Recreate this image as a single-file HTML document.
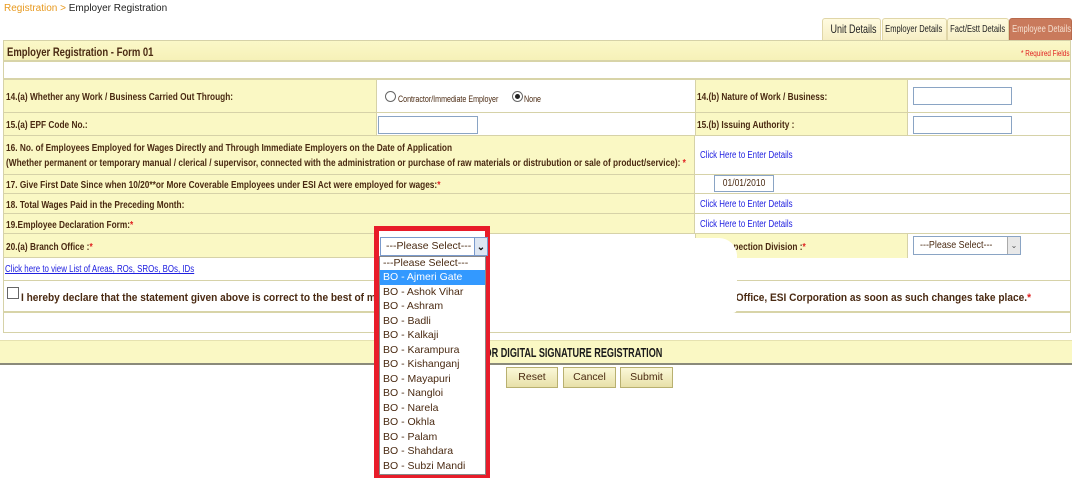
<!DOCTYPE html>
<html><head><meta charset="utf-8"><style>
*{margin:0;padding:0;box-sizing:border-box}
body{width:1072px;height:480px;background:#fff;position:relative;overflow:hidden;font-family:"Liberation Sans",sans-serif;color:#4a2a12}
.a{position:absolute;white-space:nowrap}
.n{transform:scaleX(.79);transform-origin:0 0}
.y{background:#faf8c4}
.b{font-weight:bold;font-size:10.5px}
.l{font-size:10px;color:#2020e0}
.hl{border-bottom:1px solid #d6d2a8}
.inp{position:absolute;background:#fff;border:1px solid #8aa4c4;height:18px}
.tab{position:absolute;top:18px;height:22px;border:1px solid #e0d6a8;border-bottom:none;border-radius:3px 3px 0 0;background:linear-gradient(#fffbe0,#f6eec4);font-size:10.5px;color:#222;line-height:21px;white-space:nowrap;overflow:hidden}
.tab span{display:inline-block;transform:scaleX(.72);transform-origin:0 0;padding-left:3px}
.btn{position:absolute;top:367px;height:21px;border:1px solid #b8b070;background:linear-gradient(#fbf8d8,#e8e0a8);font-size:10.5px;text-align:center;line-height:19px;color:#4a2a12}
.it{height:14.5px;line-height:14.5px;padding-left:3px;font-size:10.5px;color:#4a2a12;white-space:nowrap}
</style></head><body>
<div class="a" style="left:4px;top:3px;font-size:10px"><span style="color:#e89a20">Registration</span> <span style="color:#e89a20">&gt;</span> <span style="color:#222">Employer Registration</span></div>

<div class="tab" style="left:822px;width:59px;font-size:12px"><span style="padding-left:10px;transform:scaleX(.75)">Unit Details</span></div>
<div class="tab" style="left:882px;width:65px"><span>Employer Details</span></div>
<div class="tab" style="left:947px;width:62px"><span>Fact/Estt Details</span></div>
<div class="tab" style="left:1009px;width:63px;background:#c97a5c;border-color:#b86a4c;color:#f5e0d0"><span>Employee Details</span></div>

<div class="a" style="left:3px;top:40px;width:1068px;height:293px;border:1px solid #d6d2a8;background:#fff"></div>
<div class="a" style="left:4px;top:41px;width:1066px;height:21px;background:linear-gradient(#fbf8c8,#f6f1b8);border-bottom:2px solid #d8d4a8"></div>
<div class="a b n" style="left:7px;top:45px;font-size:12px">Employer Registration - Form 01</div>
<div class="a n" style="left:1021px;top:49px;font-size:8px;color:#e02020">* Required Fields</div>

<div class="a" style="left:3px;top:78px;width:1068px;border-top:2px solid #d8d4a8"></div>
<div class="a y hl" style="left:4px;top:80px;width:373px;height:33px;border-right:1px solid #d6d2a8"></div>
<div class="a b n" style="left:6px;top:91px">14.(a) Whether any Work / Business Carried Out Through:</div>
<div class="a hl" style="left:377px;top:80px;width:318px;height:33px"></div>
<div class="a" style="left:385px;top:91px;width:11px;height:11px;border:1px solid #666;border-radius:50%"></div>
<div class="a n" style="left:398px;top:94px;font-size:9px">Contractor/Immediate Employer</div>
<div class="a" style="left:512px;top:91px;width:11px;height:11px;border:1px solid #666;border-radius:50%"><div style="margin:2px;width:5px;height:5px;border-radius:50%;background:#222"></div></div>
<div class="a n" style="left:524px;top:94px;font-size:9px">None</div>
<div class="a y hl" style="left:695px;top:80px;width:213px;height:33px;border-left:1px solid #d6d2a8;border-right:1px solid #d6d2a8"></div>
<div class="a b n" style="left:697px;top:91px">14.(b) Nature of Work / Business:</div>
<div class="a hl" style="left:908px;top:80px;width:162px;height:33px"></div>
<div class="inp" style="left:913px;top:87px;width:99px"></div>

<div class="a y hl" style="left:4px;top:113px;width:373px;height:23px;border-right:1px solid #d6d2a8"></div>
<div class="a b n" style="left:6px;top:119px">15.(a) EPF Code No.:</div>
<div class="inp" style="left:378px;top:116px;width:100px"></div>
<div class="a hl" style="left:377px;top:113px;width:318px;height:23px"></div>
<div class="a y hl" style="left:695px;top:113px;width:213px;height:23px;border-left:1px solid #d6d2a8;border-right:1px solid #d6d2a8"></div>
<div class="a b n" style="left:697px;top:119px">15.(b) Issuing Authority :</div>
<div class="inp" style="left:913px;top:116px;width:99px"></div>
<div class="a" style="left:908px;top:135px;width:162px;border-top:1px solid #d6d2a8"></div>

<div class="a y hl" style="left:4px;top:136px;width:691px;height:39px;border-right:1px solid #d6d2a8"></div>
<div class="a b n" style="left:6px;top:141px;line-height:15px">16. No. of Employees Employed for Wages Directly and Through Immediate Employers on the Date of Application<br>(Whether permanent or temporary manual / clerical / supervisor, connected with the administration or purchase of raw materials or distrubution or sale of product/service): <span style="color:#e02020">*</span></div>
<div class="a l n" style="left:700px;top:150px">Click Here to Enter Details</div>
<div class="a" style="left:695px;top:174px;width:375px;border-top:1px solid #d6d2a8"></div>

<div class="a y hl" style="left:4px;top:175px;width:691px;height:19px;border-right:1px solid #d6d2a8"></div>
<div class="a b n" style="left:6px;top:179px">17. Give First Date Since when 10/20**or More Coverable Employees under ESI Act were employed for wages:<span style="color:#e02020">*</span></div>
<div class="a" style="left:714px;top:175px;width:60px;height:17px;border:1px solid #8aa4c4;background:#fff;font-size:10px;line-height:15px;text-align:center"><span style="display:inline-block;transform:scaleX(.85)">01/01/2010</span></div>
<div class="a" style="left:695px;top:193px;width:375px;border-top:1px solid #d6d2a8"></div>

<div class="a y hl" style="left:4px;top:194px;width:691px;height:20px;border-right:1px solid #d6d2a8"></div>
<div class="a b n" style="left:6px;top:199px">18. Total Wages Paid in the Preceding Month:</div>
<div class="a l n" style="left:700px;top:199px">Click Here to Enter Details</div>
<div class="a" style="left:695px;top:213px;width:375px;border-top:1px solid #d6d2a8"></div>

<div class="a y hl" style="left:4px;top:214px;width:691px;height:20px;border-right:1px solid #d6d2a8"></div>
<div class="a b n" style="left:6px;top:219px">19.Employee Declaration Form:<span style="color:#e02020">*</span></div>
<div class="a l n" style="left:700px;top:219px">Click Here to Enter Details</div>
<div class="a" style="left:695px;top:233px;width:375px;border-top:1px solid #d6d2a8"></div>

<div class="a y hl" style="left:4px;top:234px;width:373px;height:24px;border-right:1px solid #d6d2a8"></div>
<div class="a b n" style="left:6px;top:241px">20.(a) Branch Office :<span style="color:#e02020">*</span></div>
<div class="a y" style="left:695px;top:234px;width:213px;height:24px;border-left:1px solid #d6d2a8;border-right:1px solid #d6d2a8"></div>
<div class="a b n" style="left:697px;top:241px">20.(b) Inspection Division :<span style="color:#e02020">*</span></div>
<div class="a" style="left:913px;top:236px;width:108px;height:19px;border:1px solid #8aa4c4;background:#fff;font-size:10.5px;line-height:17px;padding-left:6px"><span style="display:inline-block;transform:scaleX(.85);transform-origin:0 0">---Please Select---</span><div class="a" style="right:0;top:0;width:13px;height:17px;background:#e8e8e8;border-left:1px solid #aaa;font-size:8px;text-align:center;color:#555">&#8964;</div></div>

<div class="a" style="left:4px;top:258px;width:1066px;height:23px;border-bottom:1px solid #d6d2a8"></div>
<div class="a n" style="left:5px;top:264px;font-size:10px;color:#2020e0;text-decoration:underline">Click here to view List of Areas, ROs, SROs, BOs, IDs</div>

<div class="a" style="left:4px;top:281px;width:1066px;height:32px;border-bottom:2px solid #d8d4a8"></div>
<div class="a" style="left:7px;top:287px;width:12px;height:12px;border:1px solid #666;background:#fff"></div>
<div class="a b" style="left:21px;top:292px;font-size:11px;transform:scaleX(.92);transform-origin:0 0">I hereby declare that the statement given above is correct to the best of my knowledge and belief. I undertake to inform any changes to the Regional Office, ESI Corporation as soon as such changes take place.<span style="color:#e02020">*</span></div>

<div class="a" style="left:490px;top:238px;width:247px;height:75px;background:#fff;border-radius:0 18px 4px 0"></div>

<div class="a" style="left:0;top:340px;width:1072px;height:25px;background:#faf8c4;border-top:1px solid #e6e2b0;border-bottom:2px solid #8a8a7a"></div>
<div class="a b" style="left:479px;top:345px;font-size:13px;color:#1a1a1a;transform:scaleX(.7);transform-origin:0 0">FOR DIGITAL SIGNATURE REGISTRATION</div>
<div class="btn" style="left:440px;width:49px"></div>
<div class="btn" style="left:506px;width:52px">Reset</div>
<div class="btn" style="left:563px;width:53px">Cancel</div>
<div class="btn" style="left:620px;width:53px">Submit</div>

<div class="a" style="left:374px;top:226px;width:116px;height:252px;border:5px solid #e81c2a;background:#fff"></div>
<div class="a" style="left:380px;top:237px;width:108px;height:19px;border:1px solid #7a9acc;background:#fff;font-size:10.5px;line-height:17px;padding-left:5px">---Please Select---<div class="a" style="right:0;top:0;width:13px;height:17px;background:#dde6f2;border-left:1px solid #7a9acc;font-size:10px;font-weight:bold;text-align:center;line-height:19px;color:#111">&#8964;</div></div>
<div class="a" style="left:379px;top:256px;width:107px;height:219px;border:1px solid #888;background:#fff">
<div class="it" style="height:13px;line-height:13px">---Please Select---</div>
<div class="it" style="background:#3399ff;color:#fff">BO - Ajmeri Gate</div>
<div class="it">BO - Ashok Vihar</div>
<div class="it">BO - Ashram</div>
<div class="it">BO - Badli</div>
<div class="it">BO - Kalkaji</div>
<div class="it">BO - Karampura</div>
<div class="it">BO - Kishanganj</div>
<div class="it">BO - Mayapuri</div>
<div class="it">BO - Nangloi</div>
<div class="it">BO - Narela</div>
<div class="it">BO - Okhla</div>
<div class="it">BO - Palam</div>
<div class="it">BO - Shahdara</div>
<div class="it">BO - Subzi Mandi</div>
</div>
</body></html>
